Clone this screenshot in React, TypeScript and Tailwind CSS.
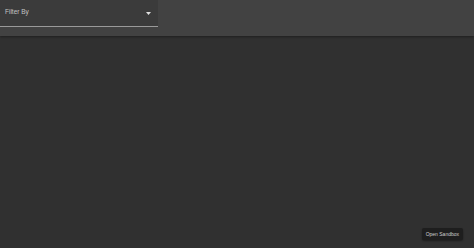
import React from 'react';

const App: React.FC = () => {
  return (
    <div className="relative w-[474px] h-[248px] bg-[#303030] overflow-hidden" style={{ fontFamily: '"Liberation Sans", Arial, sans-serif' }}>
      {/* toolbar */}
      <div className="h-[36px] bg-[#424242] shadow-[0_1px_2px_rgba(0,0,0,0.35)] flex items-start">
        <div className="relative w-[158px] h-[27px] bg-[#3b3b3b] border-b border-[#9a9a9a] flex items-start justify-between pl-[5px] pr-[7px]">
          <span className="mt-[9px] text-[6.5px] leading-none text-[#c4c4c4]">Filter By</span>
          <svg className="mt-[12px]" width="5" height="3" viewBox="0 0 5 3">
            <path d="M0 0h5L2.5 3z" fill="#e0e0e0" />
          </svg>
        </div>
      </div>

      <button className="absolute right-[11px] bottom-[8px] h-[12px] px-[4px] rounded-[2px] bg-[#1e1e1e] text-[5px] leading-[12px] text-[#cfcfcf] shadow-[0_1px_2px_rgba(0,0,0,0.4)]">
        Open Sandbox
      </button>
    </div>
  );
};

export default App;
